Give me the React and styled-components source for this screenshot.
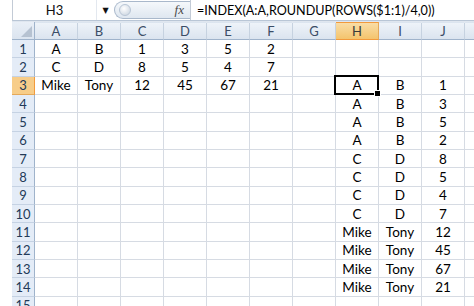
import React from "react";
import styled, { createGlobalStyle } from "styled-components";

const GlobalStyle = createGlobalStyle`
  html, body {
    margin: 0;
    padding: 0;
    background: #ffffff;
  }
  body {
    font-family: "Lato", "Liberation Sans", sans-serif;
  }
`;

const COLS = ["A", "B", "C", "D", "E", "F", "G", "H", "I", "J", ""];

// sheet contents, one object per row, keyed by column letter
const DATA = {
  1: { A: "A", B: "B", C: "1", D: "3", E: "5", F: "2" },
  2: { A: "C", B: "D", C: "8", D: "5", E: "4", F: "7" },
  3: { A: "Mike", B: "Tony", C: "12", D: "45", E: "67", F: "21", H: "A", I: "B", J: "1" },
  4: { H: "A", I: "B", J: "3" },
  5: { H: "A", I: "B", J: "5" },
  6: { H: "A", I: "B", J: "2" },
  7: { H: "C", I: "D", J: "8" },
  8: { H: "C", I: "D", J: "5" },
  9: { H: "C", I: "D", J: "4" },
  10: { H: "C", I: "D", J: "7" },
  11: { H: "Mike", I: "Tony", J: "12" },
  12: { H: "Mike", I: "Tony", J: "45" },
  13: { H: "Mike", I: "Tony", J: "67" },
  14: { H: "Mike", I: "Tony", J: "21" },
  15: {}
};

const Window = styled.div`
  width: 474px;
  height: 306px;
  overflow: hidden;
  box-sizing: border-box;
  padding-left: 12px;
  background: #ffffff;
`;

const FormulaBar = styled.div`
  display: flex;
  align-items: stretch;
  height: 20px;
  border-left: 1px solid #c3cbd6;
  border-bottom: 1px solid #b9c6d6;
  background: #ffffff;
`;

const NameBox = styled.div`
  width: 83px;
  display: flex;
  align-items: center;
  justify-content: center;
  font-size: 13px;
  color: #111;
  border-right: 1px solid #e3e8ef;
`;

const DropArrow = styled.div`
  width: 17px;
  display: flex;
  align-items: center;
  justify-content: center;
  font-family: "DejaVu Sans", sans-serif;
  font-size: 8px;
  color: #111;
`;

const Pill = styled.div`
  width: 76px;
  margin: 1px 0;
  display: flex;
  align-items: center;
  justify-content: space-between;
  padding: 0 6px 0 4px;
  box-sizing: border-box;
  border: 1px solid #a9b8cb;
  border-right: none;
  border-radius: 10px 0 0 10px;
  background: linear-gradient(#f5f8fb, #dfe7f0);
`;

const Knob = styled.span`
  width: 10px;
  height: 10px;
  border-radius: 50%;
  background: radial-gradient(circle at 40% 35%, #ffffff, #c4cfdc);
  border: 1px solid #b8c5d5;
`;

const Fx = styled.span`
  font-family: "Liberation Serif", serif;
  font-style: italic;
  font-size: 13px;
  color: #4a4a4a;
`;

const FormulaText = styled.div`
  flex: 1;
  display: flex;
  align-items: center;
  padding-left: 6px;
  font-size: 12.6px;
  color: #000;
  white-space: nowrap;
  border-left: 1px solid #c3cbd6;
`;

const Strip = styled.div`
  height: 1px;
  background: #dfe6ef;
`;

const Sheet = styled.div`
  display: grid;
  grid-template-columns: 23px repeat(11, 43px);
  grid-template-rows: 18px;
  grid-auto-rows: 18.35px;
`;

const Corner = styled.div`
  position: relative;
  box-sizing: border-box;
  background: linear-gradient(#e9eff7, #dbe4ef);
  border-right: 1px solid #9fb3cb;
  border-bottom: 1px solid #9fb3cb;

  &::after {
    content: "";
    position: absolute;
    right: 2px;
    bottom: 2px;
    width: 0;
    height: 0;
    border-left: 11px solid transparent;
    border-bottom: 11px solid #b6c2d1;
  }
`;

const ColHeader = styled.div`
  display: flex;
  align-items: center;
  justify-content: center;
  box-sizing: border-box;
  font-size: 13px;
  color: ${(p) => (p.$active ? "#3b3b3b" : "#3b4d66")};
  background: ${(p) =>
    p.$active
      ? "linear-gradient(#f9dda6, #f4c46d)"
      : "linear-gradient(#eef3f9, #dbe4ef)"};
  border-top: ${(p) => (p.$active ? "1px solid #f29a3c" : "1px solid transparent")};
  border-right: 1px solid ${(p) => (p.$active ? "#e5a95a" : "#c6d2e0")};
  border-bottom: 1px solid ${(p) => (p.$active ? "#f29a3c" : "#9fb3cb")};
`;

const RowHeader = styled.div`
  display: flex;
  align-items: center;
  justify-content: center;
  box-sizing: border-box;
  font-size: 13px;
  color: #223a58;
  background: ${(p) => (p.$active ? "#f7cd89" : "#e4ecf7")};
  border-right: 1px solid ${(p) => (p.$active ? "#f29a3c" : "#9fb3cb")};
  border-bottom: 1px solid ${(p) => (p.$active ? "#e5a95a" : "#c5d2e3")};
`;

const Cell = styled.div`
  position: relative;
  display: flex;
  align-items: center;
  justify-content: center;
  box-sizing: border-box;
  font-size: 13.5px;
  color: #000;
  border-right: 1px solid #d6dbe3;
  border-bottom: 1px solid #d6dbe3;

  ${(p) =>
    p.$selected &&
    `
    &::before {
      content: "";
      position: absolute;
      inset: -2px -1px -1px -2px;
      border: 2px solid #000;
      z-index: 2;
    }
    &::after {
      content: "";
      position: absolute;
      right: -3px;
      bottom: -3px;
      width: 5px;
      height: 5px;
      background: #000;
      border: 1px solid #fff;
      z-index: 3;
    }
  `}
`;

const ACTIVE_COL = "H";
const ACTIVE_ROW = 3;

function App() {
  const rows = Object.keys(DATA).map(Number);
  return (
    <Window>
      <GlobalStyle />
      <FormulaBar>
        <NameBox>H3</NameBox>
        <DropArrow>▼</DropArrow>
        <Pill>
          <Knob />
          <Fx>fx</Fx>
        </Pill>
        <FormulaText>=INDEX(A:A,ROUNDUP(ROWS($1:1)/4,0))</FormulaText>
      </FormulaBar>
      <Strip />
      <Sheet>
        <Corner />
        {COLS.map((c, i) => (
          <ColHeader key={"h" + i} $active={c === ACTIVE_COL}>
            {c}
          </ColHeader>
        ))}
        {rows.map((r) => (
          <React.Fragment key={r}>
            <RowHeader $active={r === ACTIVE_ROW}>{r}</RowHeader>
            {COLS.map((c, i) => (
              <Cell key={i} $selected={r === ACTIVE_ROW && c === ACTIVE_COL}>
                {DATA[r][c] || ""}
              </Cell>
            ))}
          </React.Fragment>
        ))}
      </Sheet>
    </Window>
  );
}

export default App;
